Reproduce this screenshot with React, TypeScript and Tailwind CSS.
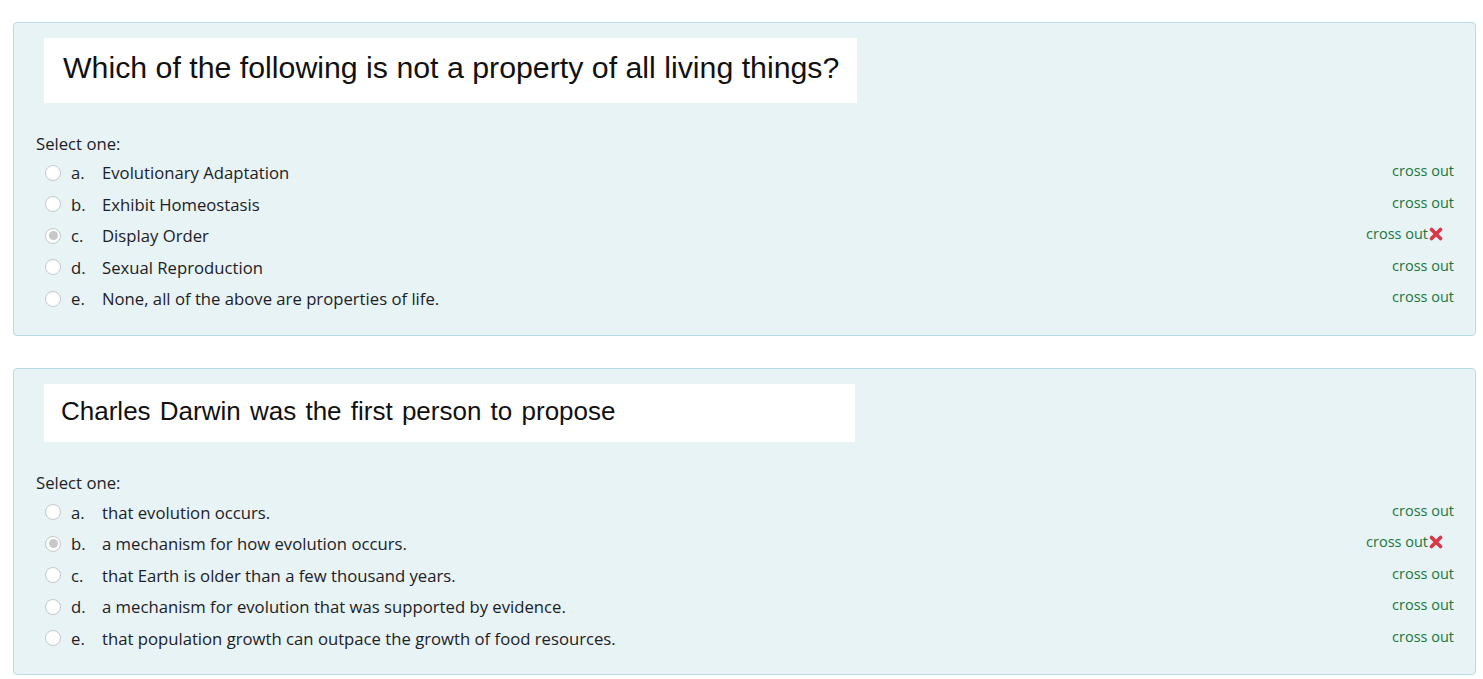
import React from "react";

type Question = {
  text: string;
  imgH: string;
  textCls: string;
  boxW: string;
  gap: string;
  optGap: string;
  pad: string;
  selected: number;
  options: string[];
};

const questions: Question[] = [
  {
    text: "Which of the following is not a property of all living things?",
    imgH: "h-[65px]",
    textCls: "text-[30.3px] pl-[19px] pb-[6px]",
    boxW: "w-[813px]",
    gap: "mt-[29px]",
    optGap: "mt-[1px]",
    pad: "pb-[20px] mb-[32px]",
    selected: 2,
    options: [
      "Evolutionary Adaptation",
      "Exhibit Homeostasis",
      "Display Order",
      "Sexual Reproduction",
      "None, all of the above are properties of life.",
    ],
  },
  {
    text: "Charles Darwin was the first person to propose",
    imgH: "h-[58px]",
    textCls: "text-[26px] pl-[17px] pb-[2px] [word-spacing:2px]",
    boxW: "w-[811px]",
    gap: "mt-[29px]",
    optGap: "mt-[2px]",
    pad: "pb-[20px]",
    selected: 1,
    options: [
      "that evolution occurs.",
      "a mechanism for how evolution occurs.",
      "that Earth is older than a few thousand years.",
      "a mechanism for evolution that was supported by evidence.",
      "that population growth can outpace the growth of food resources.",
    ],
  },
];

function Radio({ checked }: { checked: boolean }) {
  return (
    <span className="w-[16px] h-[16px] rounded-full border border-[#c4c8cb] bg-white flex items-center justify-center">
      {checked && <span className="w-[9px] h-[9px] rounded-full bg-[#c6c8ca]" />}
    </span>
  );
}

function CrossX() {
  return (
    <svg className="w-[14px] h-[14px] ml-[1px] mr-[11px]" viewBox="0 0 14 14">
      <path d="M2.5 2.5L11.5 11.5M11.5 2.5L2.5 11.5" stroke="#dc3545" strokeWidth={3.6} strokeLinecap="round" />
    </svg>
  );
}

export default function App() {
  return (
    <div className="min-h-screen bg-white pt-[22px] font-['Open_Sans',sans-serif] text-[#1d2125]">
      {questions.map((q, qi) => (
        <div
          key={qi}
          className={`ml-[13px] w-[1463px] rounded-[4px] border border-[#b8dce2] bg-[#e7f3f5] pt-[15px] px-[22px] ${q.pad}`}
        >
          <div className={`ml-[8px] ${q.boxW} ${q.imgH} bg-white flex items-center`}>
            <span className={`font-['Liberation_Sans',Arial,sans-serif] text-[#111] ${q.textCls}`}>{q.text}</span>
          </div>
          <div className={`${q.gap} text-[16.7px] leading-[24px]`}>Select one:</div>
          <div className={q.optGap}>
            {q.options.map((opt, i) => (
              <div key={i} className="h-[31.5px] flex items-center text-[16.7px]">
                <span className="ml-[9px]">
                  <Radio checked={i === q.selected} />
                </span>
                <span className="ml-[10px] w-[31px]">{"abcde"[i]}.</span>
                <span className="flex-1">{opt}</span>
                <span className="flex items-center -mt-[3px] mr-[-1px] text-[14.5px] text-[#1a7640]">
                  cross out
                  {i === q.selected && <CrossX />}
                </span>
              </div>
            ))}
          </div>
        </div>
      ))}
    </div>
  );
}
